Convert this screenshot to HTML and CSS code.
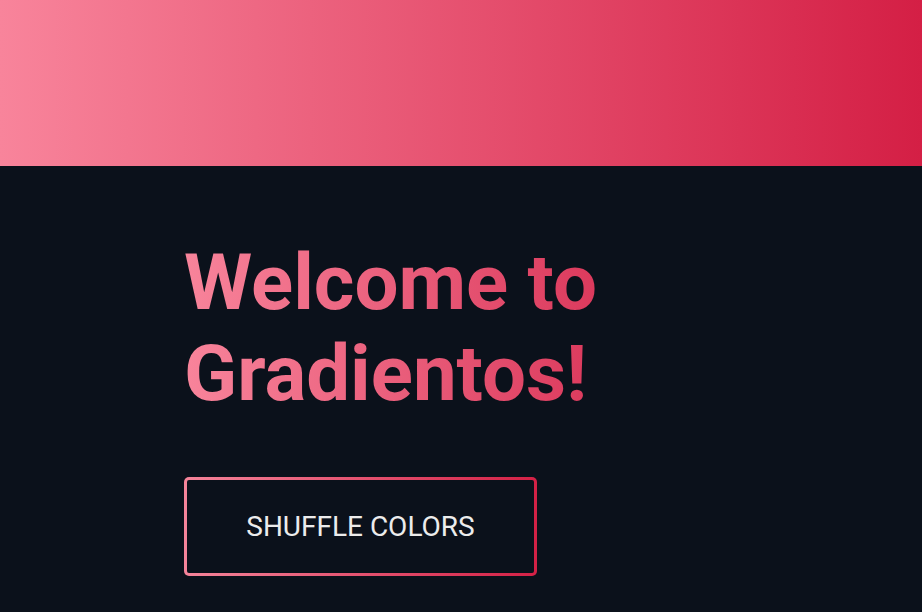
FILE: index.html
```html
<!DOCTYPE html>
<html lang="en">
<head>
  <meta charset="UTF-8">
  <meta name="viewport" content="width=device-width, initial-scale=1.0">
  <title>Gradientos</title>
  <link rel="stylesheet" href="styles.css">
</head>
<body>
  <header class="banner"></header>

  <main class="hero">
    <h1 class="hero-title">Welcome to<br>Gradientos!</h1>
    <button class="shuffle-button">SHUFFLE COLORS</button>
  </main>
</body>
</html>
```

FILE: styles.css
```css
body {
  margin: 0;
  background-color: #0b111b;
  font-family: Roboto, "Noto Sans", sans-serif;
}

.banner {
  height: 166px;
  background: linear-gradient(to right, #f8849b, #d41f45);
}

.hero {
  padding: 71px 184px 0;
}

.hero-title {
  display: inline-block;
  margin: 0;
  font-size: 78px;
  font-weight: 700;
  line-height: 91px;
  background: linear-gradient(to right, #f8849b, #dc3a5d);
  -webkit-background-clip: text;
  background-clip: text;
  color: transparent;
}

.shuffle-button {
  display: block;
  margin-top: 58px;
  width: 353px;
  height: 99px;
  border: 3px solid transparent;
  border-radius: 5px;
  background:
    linear-gradient(#0b111b, #0b111b) padding-box,
    linear-gradient(to right, #f5849a, #d42146) border-box;
  color: #ececec;
  font-family: Roboto, "Noto Sans", sans-serif;
  font-size: 28px;
  font-weight: 400;
  cursor: pointer;
}
```
